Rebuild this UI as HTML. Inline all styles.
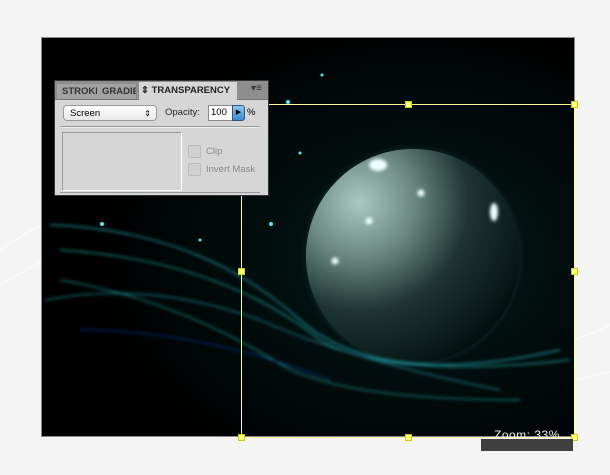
<!DOCTYPE html><html><head><style>
body{margin:0;width:610px;height:475px;background:#f4f4f4;position:relative;overflow:hidden;font-family:"Liberation Sans",sans-serif}
.a{position:absolute}
.h{position:absolute;width:5px;height:5px;background:#ffff80;border:1px solid #cc0}
</style></head><body>
<svg class="a" style="left:0;top:0" width="610" height="475">
<defs>
<radialGradient id="g1" cx="0.7" cy="0.55" r="0.6"><stop offset="0" stop-color="#041a1a"/><stop offset="1" stop-color="#000"/></radialGradient>
<radialGradient id="pl" cx="0.25" cy="0.25" r="0.85"><stop offset="0" stop-color="#a8c8c0"/><stop offset="0.3" stop-color="#6a8880"/><stop offset="0.6" stop-color="#1e3533"/><stop offset="1" stop-color="#031010"/></radialGradient>
<radialGradient id="gl" cx="0.5" cy="0.5" r="0.5"><stop offset="0.85" stop-color="#7fe0e0" stop-opacity="0.45"/><stop offset="1" stop-color="#000" stop-opacity="0"/></radialGradient>
<filter id="b"><feGaussianBlur stdDeviation="1.5"/></filter>
</defs>
<g stroke="#fff" stroke-opacity="0.8" fill="none"><path d="M0 250 Q30 230 41 225"/><path d="M0 285 Q25 270 41 262"/><path d="M575 340 Q600 330 610 325"/><path d="M575 380 Q595 375 610 372"/></g>
<rect x="41" y="37" width="534" height="400" fill="url(#g1)"/>
<rect x="41.5" y="37.5" width="533" height="399" fill="none" stroke="#888" stroke-width="1"/>
<circle cx="413" cy="256" r="114" fill="url(#gl)"/>
<circle cx="413" cy="256" r="107" fill="url(#pl)"/>
<g fill="#efffff" filter="url(#b)"><circle cx="421" cy="193" r="3.5"/><circle cx="369" cy="221" r="3.5"/><circle cx="335" cy="261" r="3.5"/><ellipse cx="378" cy="165" rx="9" ry="6"/><ellipse cx="494" cy="212" rx="4" ry="9"/></g>
<g fill="none" stroke-width="1.2" filter="url(#b)">
<path d="M50 225 Q200 230 300 320 Q380 390 560 350" stroke="#20a0b0"/>
<path d="M60 250 Q220 260 320 340 Q390 380 570 360" stroke="#2ad0d0" stroke-opacity="0.7"/>
<path d="M45 300 Q150 280 260 320 Q350 360 500 390" stroke="#1a7d90"/>
<path d="M60 280 Q180 300 290 370 Q360 400 520 400" stroke="#3ff" stroke-opacity="0.5"/>
<path d="M80 330 Q200 330 330 380" stroke="#138" />
</g>
<g fill="#4ef"><circle cx="288" cy="102" r="2"/><circle cx="271" cy="224" r="2"/><circle cx="300" cy="153" r="1.5"/><circle cx="102" cy="224" r="2"/><circle cx="200" cy="240" r="1.5"/><circle cx="322" cy="75" r="1.5"/></g>
<g stroke="#ffffa0" stroke-width="1"><line x1="241" y1="104.5" x2="575" y2="104.5"/><line x1="241.5" y1="104" x2="241.5" y2="437"/><line x1="241" y1="437.5" x2="575" y2="437.5"/><line x1="574.5" y1="104" x2="574.5" y2="437"/></g>
</svg>
<div class="h" style="left:238px;top:101px"></div><div class="h" style="left:405px;top:101px"></div><div class="h" style="left:571px;top:101px"></div>
<div class="h" style="left:238px;top:268px"></div><div class="h" style="left:571px;top:268px"></div>
<div class="h" style="left:238px;top:434px"></div><div class="h" style="left:405px;top:434px"></div><div class="h" style="left:571px;top:434px"></div>
<div class="a" style="left:481px;top:439px;width:92px;height:12px;background:#3f3f3f"></div>
<div class="a" style="left:494px;top:428px;color:#eee;font-size:12px;letter-spacing:0.5px">Zoom: 33%</div>
<div class="a" style="left:54px;top:80px;width:215px;height:116px;background:#d6d6d6;border:1px solid #333;box-sizing:border-box">
 <div class="a" style="left:0;top:0;width:213px;height:18px;background:#8e8e8e;border-bottom:1px solid #777"></div>
 <div class="a" style="left:2px;top:3px;width:38px;height:15px;background:#a2a2a2;font-size:9.5px;font-weight:bold;color:#333;line-height:15px;padding-left:5px;overflow:hidden">STROKE</div>
 <div class="a" style="left:42px;top:3px;width:34px;height:15px;background:#a2a2a2;font-size:9.5px;font-weight:bold;color:#333;line-height:15px;padding-left:5px;overflow:hidden">GRADIENT</div>
 <div class="a" style="left:84px;top:1px;width:96px;height:18px;background:#d6d6d6;font-size:9.5px;font-weight:bold;color:#222;line-height:18px;padding-left:2px">⇕ TRANSPARENCY</div>
 <div class="a" style="left:196px;top:2px;font-size:10px;color:#333">▾≡</div>
 <div class="a" style="left:8px;top:24px;width:94px;height:16px;background:linear-gradient(#fff,#e8e8e8);border:1px solid #999;border-radius:4px;font-size:9.5px;line-height:16px;padding-left:6px;box-sizing:border-box">Screen<span style="float:right;margin-right:5px;font-size:8px">⇕</span></div>
 <div class="a" style="left:110px;top:26px;font-size:9.5px;color:#222">Opacity:</div>
 <div class="a" style="left:153px;top:24px;width:25px;height:16px;background:#fff;border:1px solid #888;box-sizing:border-box;font-size:9.5px;line-height:14px;padding-left:2px">100</div>
 <div class="a" style="left:177px;top:24px;width:13px;height:16px;background:linear-gradient(#8cc8f0,#3a8ad0);border:1px solid #357;box-sizing:border-box;border-radius:0 3px 3px 0;font-size:7px;line-height:14px;text-align:center">▶</div>
 <div class="a" style="left:192px;top:26px;font-size:9.5px">%</div>
 <div class="a" style="left:5px;top:45px;width:200px;height:1px;background:#999;border-bottom:1px solid #eee"></div>
 <div class="a" style="left:7px;top:51px;width:118px;height:57px;border:1px solid #999;border-right-color:#fff;border-bottom-color:#fff"></div>
 <div class="a" style="left:133px;top:64px;width:11px;height:11px;border:1px solid #bbb;border-radius:2px;background:#d0d0d0"></div>
 <div class="a" style="left:151px;top:65px;font-size:9.5px;color:#888">Clip</div>
 <div class="a" style="left:133px;top:82px;width:11px;height:11px;border:1px solid #bbb;border-radius:2px;background:#d0d0d0"></div>
 <div class="a" style="left:151px;top:83px;font-size:9.5px;color:#888">Invert Mask</div>
 <div class="a" style="left:5px;top:111px;width:200px;height:1px;background:#999"></div>
</div>
</body></html>
